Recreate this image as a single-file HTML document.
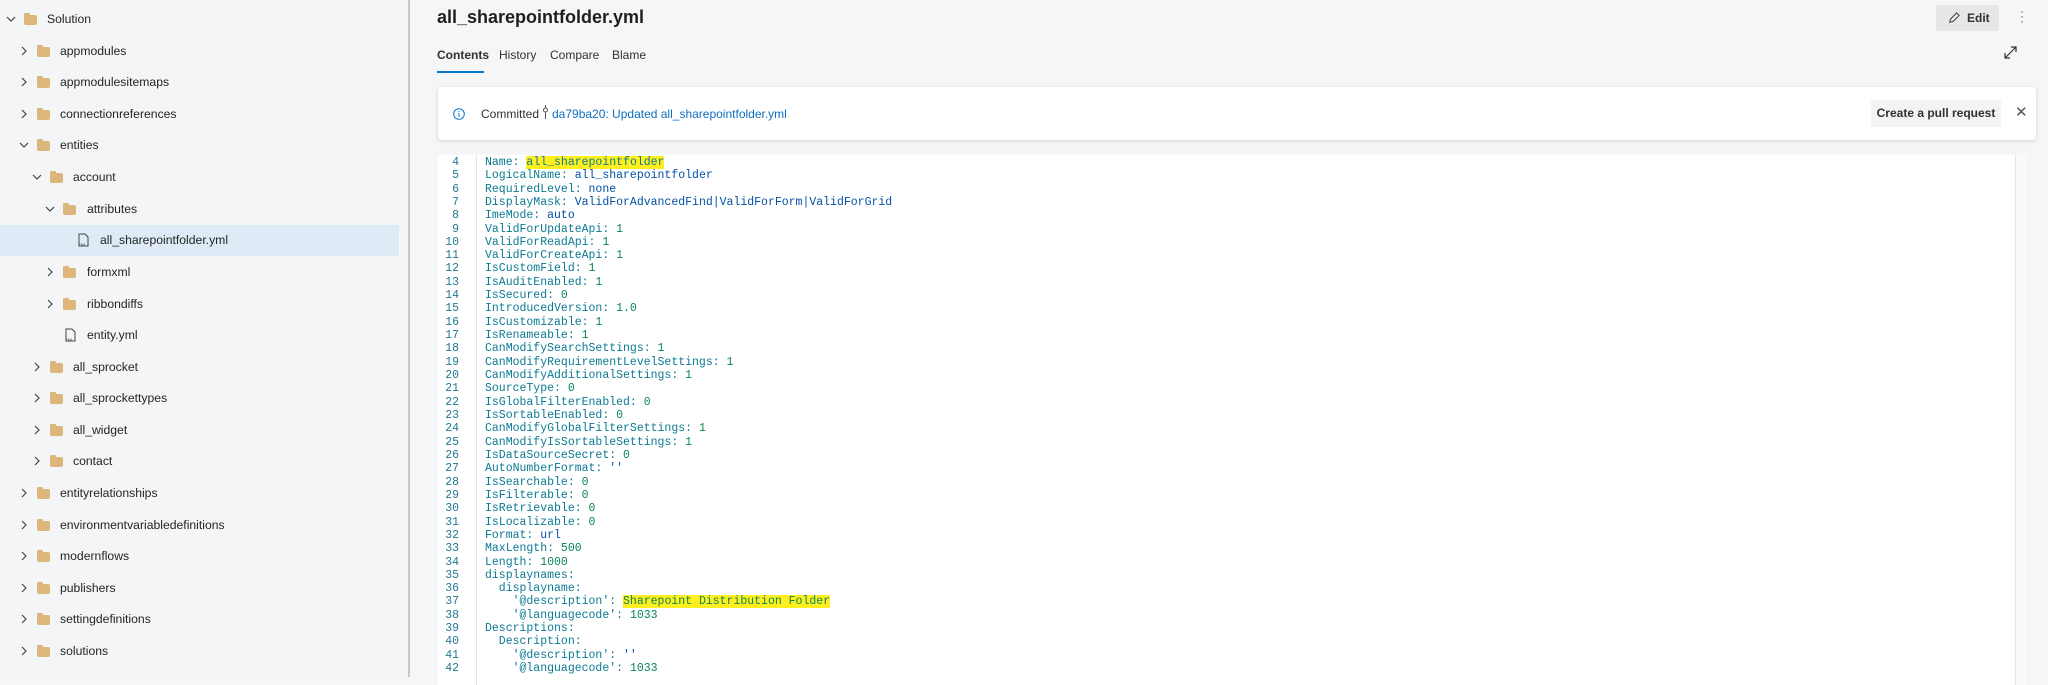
<!DOCTYPE html>
<html><head><meta charset="utf-8"><style>
*{margin:0;padding:0;box-sizing:border-box}
body{width:2048px;height:677px;overflow:hidden;background:#f5f6f7;font-family:"Liberation Sans",sans-serif;color:#323130;position:relative}
#side{position:absolute;left:0;top:0;width:410px;height:677px;background:#f4f5f6;border-right:2px solid #c8c8c8}
.row{position:absolute;left:0;width:399px;height:31px;font-size:12.2px;line-height:31px;color:#242424}
.row.sel{background:#deebf7}
.row .t{position:absolute;top:0}
.chev{position:absolute;top:10px;width:10px;height:10px}
.fold{position:absolute;top:11px;width:13px;height:10px;background:#dcb67a;border-radius:2px}
.fold:before{content:"";position:absolute;left:0;top:-2px;width:6px;height:3px;background:#dcb67a;border-radius:1px 1px 0 0}
.file{position:absolute;top:8px;width:12px;height:14px}
#main{position:absolute;left:412px;top:0;right:0;bottom:0}
.title{position:absolute;left:25px;top:7px;font-size:18px;font-weight:700;color:#201f1e}
.tab{position:absolute;top:48px;font-size:12px;color:#323130}
.banner{position:absolute;left:26px;top:87px;width:1598px;height:53px;background:#fff;border-radius:4px;box-shadow:0 1px 4px rgba(0,0,0,.15)}
.code{position:absolute;left:26px;top:155px;width:1588px;height:530px;background:#fff;font-family:"Liberation Mono",monospace;font-size:11.5px}
.ln{position:absolute;left:0;width:21px;text-align:right;color:#237893;height:13.3px;line-height:13.3px}
.cl{position:absolute;left:47px;white-space:pre;color:#0b7a93;height:13.3px;line-height:13.3px}
.v{color:#0451a5}.n{color:#098658}
.hl{background:#ffef1f}
</style></head><body>
<div id="side">
<div class="row" style="top:4px"><svg class="chev" style="left:6px" viewBox="0 0 10 10"><path d="M1 3l4 4 4-4" fill="none" stroke="#444" stroke-width="1.2"/></svg><div class="fold" style="left:24px"></div><span class="t" style="left:47px">Solution</span></div>
<div class="row" style="top:36px"><svg class="chev" style="left:19px" viewBox="0 0 10 10"><path d="M3 1l4 4-4 4" fill="none" stroke="#444" stroke-width="1.2"/></svg><div class="fold" style="left:37px"></div><span class="t" style="left:60px">appmodules</span></div>
<div class="row" style="top:67px"><svg class="chev" style="left:19px" viewBox="0 0 10 10"><path d="M3 1l4 4-4 4" fill="none" stroke="#444" stroke-width="1.2"/></svg><div class="fold" style="left:37px"></div><span class="t" style="left:60px">appmodulesitemaps</span></div>
<div class="row" style="top:99px"><svg class="chev" style="left:19px" viewBox="0 0 10 10"><path d="M3 1l4 4-4 4" fill="none" stroke="#444" stroke-width="1.2"/></svg><div class="fold" style="left:37px"></div><span class="t" style="left:60px">connectionreferences</span></div>
<div class="row" style="top:130px"><svg class="chev" style="left:19px" viewBox="0 0 10 10"><path d="M1 3l4 4 4-4" fill="none" stroke="#444" stroke-width="1.2"/></svg><div class="fold" style="left:37px"></div><span class="t" style="left:60px">entities</span></div>
<div class="row" style="top:162px"><svg class="chev" style="left:32px" viewBox="0 0 10 10"><path d="M1 3l4 4 4-4" fill="none" stroke="#444" stroke-width="1.2"/></svg><div class="fold" style="left:50px"></div><span class="t" style="left:73px">account</span></div>
<div class="row" style="top:194px"><svg class="chev" style="left:45px" viewBox="0 0 10 10"><path d="M1 3l4 4 4-4" fill="none" stroke="#444" stroke-width="1.2"/></svg><div class="fold" style="left:63px"></div><span class="t" style="left:87px">attributes</span></div>
<div class="row sel" style="top:225px"><svg class="file" style="left:77px" viewBox="0 0 12 14"><path d="M2 1h6l3 3v9H2z" fill="none" stroke="#444"/><text x="1" y="13" font-size="4" fill="#444">YML</text></svg><span class="t" style="left:100px">all_sharepointfolder.yml</span></div>
<div class="row" style="top:257px"><svg class="chev" style="left:45px" viewBox="0 0 10 10"><path d="M3 1l4 4-4 4" fill="none" stroke="#444" stroke-width="1.2"/></svg><div class="fold" style="left:63px"></div><span class="t" style="left:87px">formxml</span></div>
<div class="row" style="top:289px"><svg class="chev" style="left:45px" viewBox="0 0 10 10"><path d="M3 1l4 4-4 4" fill="none" stroke="#444" stroke-width="1.2"/></svg><div class="fold" style="left:63px"></div><span class="t" style="left:87px">ribbondiffs</span></div>
<div class="row" style="top:320px"><svg class="file" style="left:64px" viewBox="0 0 12 14"><path d="M2 1h6l3 3v9H2z" fill="none" stroke="#444"/><text x="1" y="13" font-size="4" fill="#444">YML</text></svg><span class="t" style="left:87px">entity.yml</span></div>
<div class="row" style="top:352px"><svg class="chev" style="left:32px" viewBox="0 0 10 10"><path d="M3 1l4 4-4 4" fill="none" stroke="#444" stroke-width="1.2"/></svg><div class="fold" style="left:50px"></div><span class="t" style="left:73px">all_sprocket</span></div>
<div class="row" style="top:383px"><svg class="chev" style="left:32px" viewBox="0 0 10 10"><path d="M3 1l4 4-4 4" fill="none" stroke="#444" stroke-width="1.2"/></svg><div class="fold" style="left:50px"></div><span class="t" style="left:73px">all_sprockettypes</span></div>
<div class="row" style="top:415px"><svg class="chev" style="left:32px" viewBox="0 0 10 10"><path d="M3 1l4 4-4 4" fill="none" stroke="#444" stroke-width="1.2"/></svg><div class="fold" style="left:50px"></div><span class="t" style="left:73px">all_widget</span></div>
<div class="row" style="top:446px"><svg class="chev" style="left:32px" viewBox="0 0 10 10"><path d="M3 1l4 4-4 4" fill="none" stroke="#444" stroke-width="1.2"/></svg><div class="fold" style="left:50px"></div><span class="t" style="left:73px">contact</span></div>
<div class="row" style="top:478px"><svg class="chev" style="left:19px" viewBox="0 0 10 10"><path d="M3 1l4 4-4 4" fill="none" stroke="#444" stroke-width="1.2"/></svg><div class="fold" style="left:37px"></div><span class="t" style="left:60px">entityrelationships</span></div>
<div class="row" style="top:510px"><svg class="chev" style="left:19px" viewBox="0 0 10 10"><path d="M3 1l4 4-4 4" fill="none" stroke="#444" stroke-width="1.2"/></svg><div class="fold" style="left:37px"></div><span class="t" style="left:60px">environmentvariabledefinitions</span></div>
<div class="row" style="top:541px"><svg class="chev" style="left:19px" viewBox="0 0 10 10"><path d="M3 1l4 4-4 4" fill="none" stroke="#444" stroke-width="1.2"/></svg><div class="fold" style="left:37px"></div><span class="t" style="left:60px">modernflows</span></div>
<div class="row" style="top:573px"><svg class="chev" style="left:19px" viewBox="0 0 10 10"><path d="M3 1l4 4-4 4" fill="none" stroke="#444" stroke-width="1.2"/></svg><div class="fold" style="left:37px"></div><span class="t" style="left:60px">publishers</span></div>
<div class="row" style="top:604px"><svg class="chev" style="left:19px" viewBox="0 0 10 10"><path d="M3 1l4 4-4 4" fill="none" stroke="#444" stroke-width="1.2"/></svg><div class="fold" style="left:37px"></div><span class="t" style="left:60px">settingdefinitions</span></div>
<div class="row" style="top:636px"><svg class="chev" style="left:19px" viewBox="0 0 10 10"><path d="M3 1l4 4-4 4" fill="none" stroke="#444" stroke-width="1.2"/></svg><div class="fold" style="left:37px"></div><span class="t" style="left:60px">solutions</span></div>
</div>
<div id="main">
<div class="title">all_sharepointfolder.yml</div>
<div class="tab" style="left:25px;font-weight:700">Contents</div>
<div style="position:absolute;left:25px;top:71px;width:47px;height:2px;background:#0078d4"></div>
<div class="tab" style="left:87px">History</div>
<div class="tab" style="left:138px">Compare</div>
<div class="tab" style="left:200px">Blame</div>
<div style="position:absolute;left:1524px;top:5px;width:63px;height:26px;background:#e6e7e8;border-radius:2px;font-size:12px;font-weight:700;line-height:26px"><svg style="position:absolute;left:12px;top:7px" width="12" height="12" viewBox="0 0 14 14"><path d="M2 12l1-4 7-7 3 3-7 7z" fill="none" stroke="#333" stroke-width="1.1"/></svg><span style="position:absolute;left:31px">Edit</span></div>
<div style="position:absolute;left:1608px;top:9px;font-size:12px;line-height:5px;color:#555">·<br>·<br>·</div>
<svg style="position:absolute;left:1592px;top:46px" width="13" height="13" viewBox="0 0 13 13"><path d="M1 12L12 1M7 1h5v5M1 7v5h5" fill="none" stroke="#333" stroke-width="1.2"/></svg>
<div class="banner">
<svg style="position:absolute;left:15px;top:21px" width="12" height="12" viewBox="0 0 12 12"><circle cx="6" cy="6" r="5.3" fill="none" stroke="#0078d4"/><path d="M6 5v4M6 3v1" stroke="#0078d4"/></svg>
<span style="position:absolute;left:43px;top:20px;font-size:12px;color:#323130">Committed</span>
<svg style="position:absolute;left:104px;top:18px" width="7" height="14" viewBox="0 0 7 14"><circle cx="3.5" cy="5" r="2" fill="none" stroke="#555"/><path d="M3.5 0v3M3.5 7v7" stroke="#555"/></svg>
<span style="position:absolute;left:114px;top:20px;font-size:12px;color:#106ebe">da79ba20: Updated all_sharepointfolder.yml</span>
<div style="position:absolute;left:1433px;top:13px;width:130px;height:27px;background:#f3f3f3;border-radius:2px;font-size:12px;font-weight:700;line-height:27px;text-align:center;white-space:nowrap">Create a pull request</div>
<span style="position:absolute;left:1577px;top:16px;font-size:15px;color:#555">✕</span>
</div>
<div class="code">
<div style="position:absolute;left:38px;top:0;width:1px;height:530px;background:#e5e5e5"></div>
<div style="position:absolute;right:0;top:0;width:11px;height:530px;border-left:1px solid #e8e8e8;background:#fafafa"></div>
<div id="lines"></div>
</div>
</div>
<script>
var L=[
['Name: ','<span class="hl">all_sharepointfolder</span>'],
['LogicalName: ','<span class="v">all_sharepointfolder</span>'],
['RequiredLevel: ','<span class="v">none</span>'],
['DisplayMask: ','<span class="v">ValidForAdvancedFind|ValidForForm|ValidForGrid</span>'],
['ImeMode: ','<span class="v">auto</span>'],
['ValidForUpdateApi: ','<span class="n">1</span>'],
['ValidForReadApi: ','<span class="n">1</span>'],
['ValidForCreateApi: ','<span class="n">1</span>'],
['IsCustomField: ','<span class="n">1</span>'],
['IsAuditEnabled: ','<span class="n">1</span>'],
['IsSecured: ','<span class="n">0</span>'],
['IntroducedVersion: ','<span class="n">1.0</span>'],
['IsCustomizable: ','<span class="n">1</span>'],
['IsRenameable: ','<span class="n">1</span>'],
['CanModifySearchSettings: ','<span class="n">1</span>'],
['CanModifyRequirementLevelSettings: ','<span class="n">1</span>'],
['CanModifyAdditionalSettings: ','<span class="n">1</span>'],
['SourceType: ','<span class="n">0</span>'],
['IsGlobalFilterEnabled: ','<span class="n">0</span>'],
['IsSortableEnabled: ','<span class="n">0</span>'],
['CanModifyGlobalFilterSettings: ','<span class="n">1</span>'],
['CanModifyIsSortableSettings: ','<span class="n">1</span>'],
['IsDataSourceSecret: ','<span class="n">0</span>'],
['AutoNumberFormat: ','<span class="v">\'\'</span>'],
['IsSearchable: ','<span class="n">0</span>'],
['IsFilterable: ','<span class="n">0</span>'],
['IsRetrievable: ','<span class="n">0</span>'],
['IsLocalizable: ','<span class="n">0</span>'],
['Format: ','<span class="v">url</span>'],
['MaxLength: ','<span class="n">500</span>'],
['Length: ','<span class="n">1000</span>'],
['displaynames:',''],
['  displayname:',''],
['    \'@description\': ','<span class="hl" style="color:#098658">Sharepoint Distribution Folder</span>'],
['    \'@languagecode\': ','<span class="n">1033</span>'],
['Descriptions:',''],
['  Description:',''],
['    \'@description\': ','<span class="v">\'\'</span>'],
['    \'@languagecode\': ','<span class="n">1033</span>']];
var h='';
for(var i=0;i<L.length;i++){var y=0.9+i*13.32;
h+='<div class="ln" style="top:'+y+'px">'+(i+4)+'</div><div class="cl" style="top:'+y+'px">'+L[i][0]+L[i][1]+'</div>';}
document.getElementById('lines').innerHTML=h;
</script>
</body></html>
